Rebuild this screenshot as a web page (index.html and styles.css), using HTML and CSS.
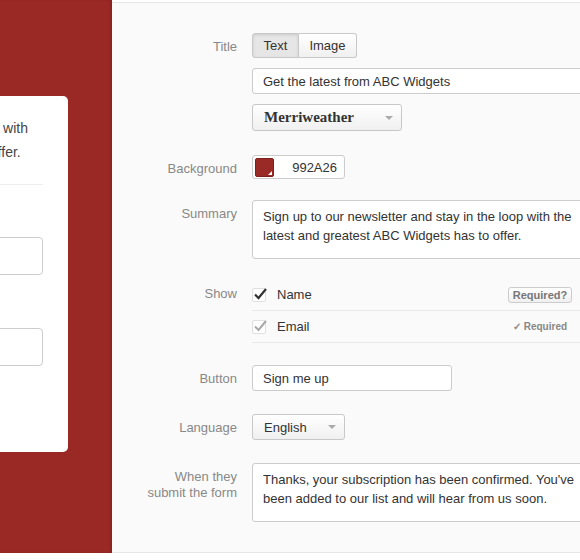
FILE: index.html
```html
<!DOCTYPE html>
<html lang="en">
<head>
    <meta charset="UTF-8">
    <meta name="viewport" content="width=device-width, initial-scale=1.0">
    <title>Signup Form Settings</title>
    <link rel="stylesheet" href="styles.css">
</head>
<body>
    <div class="app">
        <div class="preview">
            <div class="card">
                <p class="card-summary">Sign up to our newsletter and stay in the loop with<br>the latest and greatest ABC Widgets has to offer.</p>
                <hr class="card-rule">
                <div class="card-input"></div>
                <div class="card-input"></div>
            </div>
        </div>

        <div class="settings">
            <div class="field field-title">
                <div class="label">Title</div>
                <div class="control stack">
                    <div class="segmented">
                        <button class="seg active">Text</button>
                        <button class="seg">Image</button>
                    </div>
                    <input class="text-input" type="text" value="Get the latest from ABC Widgets">
                    <div class="select select-font">
                        <span>Merriweather</span>
                        <span class="caret"></span>
                    </div>
                </div>
            </div>

            <div class="field field-bg">
                <div class="label">Background</div>
                <div class="control">
                    <div class="color-input">
                        <span class="swatch"></span>
                        <span class="hex">992A26</span>
                    </div>
                </div>
            </div>

            <div class="field field-summary">
                <div class="label">Summary</div>
                <div class="control">
                    <textarea class="text-area">Sign up to our newsletter and stay in the loop with the latest and greatest ABC Widgets has to offer.</textarea>
                </div>
            </div>

            <div class="field field-show">
                <div class="label">Show</div>
                <div class="control checks">
                    <div class="check-row">
                        <span class="checkbox">
                            <svg width="16" height="14" viewBox="0 0 16 14"><path d="M2 7.5 L5.5 11 L13 2" fill="none" stroke="#333" stroke-width="2.2"/></svg>
                        </span>
                        <span class="check-name">Name</span>
                        <button class="req-btn">Required?</button>
                    </div>
                    <div class="check-row">
                        <span class="checkbox">
                            <svg width="16" height="14" viewBox="0 0 16 14"><path d="M2 7.5 L5.5 11 L13 2" fill="none" stroke="#a8a8a8" stroke-width="2"/></svg>
                        </span>
                        <span class="check-name">Email</span>
                        <span class="req-tag">&#10003; Required</span>
                    </div>
                </div>
            </div>

            <div class="field field-button">
                <div class="label">Button</div>
                <div class="control">
                    <input class="text-input short" type="text" value="Sign me up">
                </div>
            </div>

            <div class="field field-lang">
                <div class="label">Language</div>
                <div class="control">
                    <div class="select select-lang">
                        <span>English</span>
                        <span class="caret"></span>
                    </div>
                </div>
            </div>

            <div class="field field-thanks">
                <div class="label">When they<br>submit the form</div>
                <div class="control">
                    <textarea class="text-area">Thanks, your subscription has been confirmed. You've been added to our list and will hear from us soon.</textarea>
                </div>
            </div>
        </div>
    </div>
</body>
</html>
```

FILE: styles.css
```css
*{
  margin: 0;
  padding: 0;
  box-sizing: border-box;
}

body{
  background-color: #fff;
  font-family: "Liberation Sans", Arial, sans-serif;
  font-size: 13px;
  color: #333;
  overflow: hidden;
}

.app{
  display: flex;
  height: 553px;
  width: 580px;
}

/* left preview */
.preview{
  width: 112px;
  flex-shrink: 0;
  background-color: #9a2824;
  box-shadow: inset -2px 0 2px rgba(0,0,0,0.12);
  overflow: hidden;
}

.card{
  width: 374px;
  height: 356px;
  margin-top: 96px;
  margin-left: -306px;
  padding: 20px 25px 0 25px;
  background-color: #fff;
  border-radius: 0 5px 5px 0;
}

.card-summary{
  font-size: 14px;
  line-height: 24px;
  color: #444;
}

.card-rule{
  border: none;
  border-top: 1px solid #eee;
  margin: 20px 0 0 0;
}

.card-input{
  height: 38px;
  margin-top: 52px;
  border: 1px solid #ccc;
  border-radius: 4px;
}

.card-input + .card-input{
  margin-top: 53px;
}

/* right settings */
.settings{
  flex: 1;
  min-width: 0;
  overflow: hidden;
  margin-top: 2px;
  height: 551px;
  background-color: #fafafa;
  border-top: 1px solid #e6e6e6;
  border-bottom: 1px solid #e6e6e6;
  padding-top: 30px;
}

.field{
  display: grid;
  grid-template-columns: 125px 340px;
  column-gap: 15px;
  margin-bottom: 23px;
}

.field-title{ margin-bottom: 24px; }
.field-bg{ margin-bottom: 21px; }
.field-summary{ margin-bottom: 20px; }
.field-show{ margin-bottom: 22px; }

.label{
  text-align: right;
  color: #888;
  padding-top: 6px;
  line-height: 16px;
}

.field-show .label{
  padding-top: 7px;
}

.stack{
  display: flex;
  flex-direction: column;
  align-items: flex-start;
  gap: 10px;
}

.segmented{
  display: flex;
}

.seg{
  height: 25px;
  padding: 0 10px;
  font-family: inherit;
  font-size: 13px;
  color: #333;
  border: 1px solid #c8c8c8;
  background: linear-gradient(#fff, #f0f0f0);
}

.seg:first-child{
  width: 47px;
  border-radius: 3px 0 0 3px;
}

.seg:last-child{
  width: 58px;
  border-left: none;
  border-radius: 0 3px 3px 0;
}

.seg.active{
  background: #e6e6e6;
  box-shadow: inset 0 1px 3px rgba(0,0,0,0.12);
}

.text-input{
  width: 100%;
  height: 26px;
  padding: 0 10px;
  font-family: inherit;
  font-size: 13px;
  color: #333;
  background-color: #fff;
  border: 1px solid #ccc;
  border-radius: 3px;
}

.text-input.short{
  width: 200px;
}

.select{
  display: flex;
  align-items: center;
  justify-content: space-between;
  height: 27px;
  padding: 0 8px 0 11px;
  border: 1px solid #c8c8c8;
  border-radius: 3px;
  background: linear-gradient(#fff, #f0f0f0);
  color: #333;
}

.select-font{
  width: 150px;
  font-family: "Liberation Serif", "DejaVu Serif", serif;
  font-weight: bold;
  font-size: 15px;
}

.select-lang{
  width: 93px;
  height: 26px;
}

.caret{
  width: 0;
  height: 0;
  border-left: 4px solid transparent;
  border-right: 4px solid transparent;
  border-top: 4px solid #aaa;
}

.color-input{
  display: flex;
  align-items: center;
  justify-content: space-between;
  width: 93px;
  height: 24px;
  padding: 0 7px 0 2px;
  background-color: #fff;
  border: 1px solid #ccc;
  border-radius: 3px;
}

.swatch{
  position: relative;
  width: 19px;
  height: 19px;
  background-color: #992a26;
  border: 1px solid #7d201d;
  border-radius: 2px;
}

.swatch::after{
  content: "";
  position: absolute;
  right: 1px;
  bottom: 1px;
  border-left: 4px solid transparent;
  border-bottom: 4px solid #fff;
}

.hex{
  color: #333;
}

.text-area{
  display: block;
  width: 100%;
  height: 59px;
  padding: 6px 10px;
  font-family: inherit;
  font-size: 13px;
  line-height: 19px;
  color: #333;
  background-color: #fff;
  border: 1px solid #ccc;
  border-radius: 3px;
  resize: none;
}

.checks{
  display: flex;
  flex-direction: column;
}

.check-row{
  display: flex;
  align-items: center;
  height: 32px;
  padding-right: 20px;
  border-bottom: 1px solid #e8e8e8;
}

.checkbox{
  position: relative;
  width: 14px;
  height: 14px;
  background-color: #fff;
  border: 1px solid #e0e0e0;
  border-radius: 2px;
}

.checkbox svg{
  position: absolute;
  left: 0;
  top: -2px;
}

.check-name{
  flex: 1;
  margin-left: 11px;
}

.req-btn{
  width: 64px;
  height: 16px;
  font-family: inherit;
  font-size: 11px;
  font-weight: bold;
  color: #777;
  border: 1px solid #ccc;
  border-radius: 3px;
  background: linear-gradient(#fff, #f0f0f0);
}

.req-tag{
  width: 64px;
  text-align: center;
  font-size: 10px;
  font-weight: bold;
  color: #888;
}
```
